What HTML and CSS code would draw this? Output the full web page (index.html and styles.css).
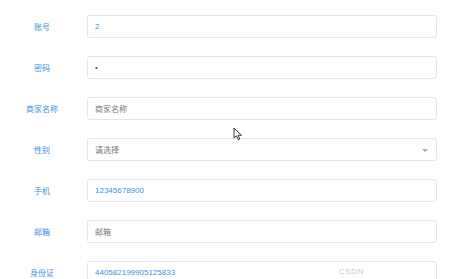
FILE: index.html
```html
<!DOCTYPE html>
<html lang="zh">
<head>
<meta charset="utf-8">
<link rel="stylesheet" href="styles.css">
</head>
<body>
<div class="form">
  <div class="row"><label class="label">账号</label><div class="input"><span class="value">2</span></div></div>
  <div class="row"><label class="label">密码</label><div class="input"><span class="value dot">•</span></div></div>
  <div class="row"><label class="label">商家名称</label><div class="input"><span class="ph">商家名称</span></div></div>
  <div class="row"><label class="label">性别</label><div class="input select"><span class="ph">请选择</span><span class="caret"></span></div></div>
  <div class="row"><label class="label">手机</label><div class="input"><span class="value">12345678900</span></div></div>
  <div class="row"><label class="label">邮箱</label><div class="input"><span class="ph">邮箱</span></div></div>
  <div class="row"><label class="label">身份证</label><div class="input"><span class="value">440582199905125833</span><span class="watermark">CSDN</span></div></div>
</div>
<svg class="cursor" width="10" height="14" viewBox="0 0 10 14"><path d="M1 1 L1 11 L3.5 8.8 L5.3 12.8 L6.8 12.1 L5.1 8.3 L8.4 8.3 Z" fill="#fff" stroke="#222" stroke-width="0.9" stroke-linejoin="round"/></svg>
</body>
</html>
```
FILE: styles.css
```css
html, body {
  margin: 0;
  padding: 0;
  background: #fff;
}
body {
  font-family: "Noto Sans CJK SC", "Liberation Sans", sans-serif;
  font-size: 8px;
  position: relative;
  width: 474px;
  height: 279px;
  overflow: hidden;
}
.form {
  padding-top: 15px;
  display: flex;
  flex-direction: column;
  gap: 18px;
}
.row {
  display: flex;
  align-items: center;
  height: 23px;
}
.label {
  width: 84px;
  text-align: center;
  color: #3d8fe0;
  line-height: 23px;
}
.input {
  margin-left: 3px;
  width: 350px;
  height: 23px;
  box-sizing: border-box;
  border: 1px solid #e3e5ea;
  border-radius: 3px;
  padding-left: 7px;
  display: flex;
  align-items: center;
  position: relative;
}
.value {
  color: #3d8fe0;
  font-family: "Liberation Sans", "Noto Sans CJK SC", sans-serif;
}
.dot {
  font-size: 8px;
  color: #555;
}
.ph {
  color: #777;
}
.caret {
  position: absolute;
  right: 8px;
  top: 10px;
  width: 0;
  height: 0;
  border-left: 3px solid transparent;
  border-right: 3px solid transparent;
  border-top: 3px solid #aaa;
}
.watermark {
  position: absolute;
  left: 251px;
  top: 5px;
  color: #c8c8c8;
  font-family: "Liberation Sans", sans-serif;
  font-size: 8px;
  letter-spacing: 0.5px;
}
.cursor {
  position: absolute;
  left: 233px;
  top: 127px;
}
```
